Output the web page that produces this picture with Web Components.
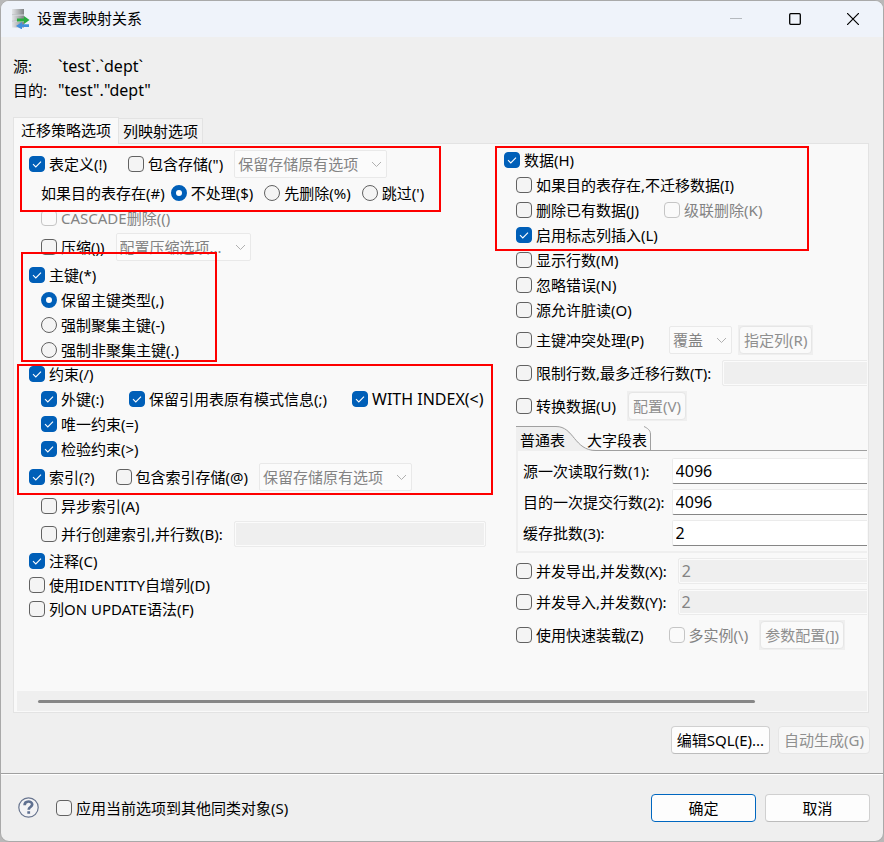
<!DOCTYPE html>
<html lang="zh-CN">
<head>
<meta charset="utf-8">
<title>设置表映射关系</title>
<style>
  body {
    margin: 0;
    background: #b8b8b8;
    color: #000;
    font: 15px/20px "Noto Sans", "Noto Sans CJK SC", sans-serif;
  }
</style>
</head>
<body>
<mapping-dialog></mapping-dialog>
<script>
  const define = (name, css, html, setup) => {
    const tpl = document.createElement('template');
    tpl.innerHTML = `<style>*{box-sizing:border-box}:host{box-sizing:border-box}${css}</style>${html}`;
    customElements.define(name, class extends HTMLElement {
      connectedCallback() {
        if (this.shadowRoot) return;
        this.attachShadow({ mode: 'open' }).append(tpl.content.cloneNode(true));
        if (setup) setup(this, this.shadowRoot);
      }
    });
  };

  /* Tick box with its label */
  define('opt-check', `
    :host { display: block; flex: none; white-space: nowrap; }
    :host([latin]) { font-size: 16px; }
    label { display: flex; align-items: center; gap: 4px; height: 20px; }
    .box { display: grid; width: 16px; height: 16px; }
    .box > * { grid-area: 1 / 1; }
    input { appearance: none; margin: 0; width: 16px; height: 16px; border: 1px solid #626262; border-radius: 4px; background: #f4f4f4; }
    input:checked { background: #005fb8; border-color: #005fb8; }
    svg { visibility: hidden; pointer-events: none; }
    input:checked + svg { visibility: visible; }
    :host([disabled]) { color: #838383; }
    input:disabled { border-color: #c5c5c5; background: #fafafa; }
  `, `<label><span class="box"><input type="checkbox"><svg width="16" height="16" viewBox="0 0 16 16" fill="none" stroke="#fff" stroke-width="1.1"><path d="M4 8.2 6.8 11 12 5.6"/></svg></span><span><slot></slot></span></label>`,
  (host, root) => {
    const box = root.querySelector('input');
    box.checked = host.hasAttribute('checked');
    box.disabled = host.hasAttribute('disabled');
  });

  /* Radio button with its label; buttons with the same group exclude each other */
  define('opt-radio', `
    :host { display: block; flex: none; white-space: nowrap; }
    label { display: flex; align-items: center; gap: 4px; height: 20px; }
    input { appearance: none; margin: 0; width: 16px; height: 16px; border: 1px solid #626262; border-radius: 50%; background: #f4f4f4; }
    input:checked { border: 5px solid #005fb8; background: #fff; }
  `, `<label><input type="radio"><span><slot></slot></span></label>`,
  (host, root) => {
    const dot = root.querySelector('input');
    dot.name = host.getAttribute('group');
    dot.checked = host.hasAttribute('checked');
    dot.addEventListener('change', () => {
      host.getRootNode().querySelectorAll(`opt-radio[group="${dot.name}"]`).forEach(other => {
        if (other !== host) other.shadowRoot.querySelector('input').checked = false;
      });
    });
  });

  /* Drop-down list */
  define('opt-select', `
    :host { display: grid; flex: none; width: 153px; height: 28px; }
    :host([size="m"]) { width: 135px; }
    :host([size="s"]) { width: 63px; }
    select, svg { grid-area: 1 / 1; }
    select { appearance: none; width: 100%; height: 28px; margin: 0; padding: 0 20px 0 3px; border: 1px solid #e9e9e9; border-radius: 2px; background: #fbfbfb; font: inherit; color: #838383; opacity: 1; text-overflow: clip; }
    svg { justify-self: end; align-self: center; margin-right: 5px; pointer-events: none; }
  `, `<select disabled><option></option></select><svg width="11" height="7" viewBox="0 0 11 7" fill="none" stroke="#b0b0b0"><path d="M1 1 5.5 5.5 10 1"/></svg>`,
  (host, root) => {
    root.querySelector('option').textContent = host.getAttribute('value');
    root.querySelector('select').setAttribute('aria-label', host.getAttribute('name'));
  });

  /* One-line text box */
  define('opt-field', `
    :host { display: block; flex: 1; min-width: 0; }
    input { display: block; width: 100%; height: 26px; margin: 0; padding: 0 3px; border: 1px solid #ebebeb; border-bottom-color: #868686; border-radius: 2px; background: #fff; font: inherit; font-size: 16px; color: #000; outline: none; }
    input:disabled { border-color: #ebebeb; background: #efefef; box-shadow: inset 0 0 0 1px #fbfbfb; color: #838383; }
  `, `<input type="text">`,
  (host, root) => {
    const field = root.querySelector('input');
    field.value = host.getAttribute('value') || '';
    field.disabled = host.hasAttribute('disabled');
    field.setAttribute('aria-label', host.getAttribute('name'));
  });

  /* Push button */
  define('push-button', `
    :host { display: block; flex: none; }
    button { display: block; width: 100%; height: 28px; margin: 0; padding: 0 5px; border: 1px solid #d0d0d0; border-bottom-color: #bcbcbc; border-radius: 4px; background: #fdfdfd; font: inherit; color: #000; white-space: nowrap; }
    button:disabled { border-color: #e6e6e6; background: #f7f7f7; color: #8f8f8f; }
    :host([inset]) { padding: 1px; background: #efefef; }
    :host([inset]) button { padding: 0 4px; background: #fafafa; }
    :host([wide]) { width: 105px; }
    :host([primary]) button { border-color: #0067c0; }
  `, `<button type="button"><slot></slot></button>`,
  (host, root) => { root.querySelector('button').disabled = host.hasAttribute('disabled'); });

  /* A horizontal run of controls */
  define('opt-row', `
    :host { display: flex; align-items: center; gap: 11px; white-space: nowrap; }
    :host([sub]) { padding-left: 12px; }
    ::slotted([near]) { margin-left: -5px; }
    ::slotted([far]) { margin-left: 10px; }
    ::slotted([farther]) { margin-left: 14px; }
  `, `<slot></slot>`);

  define('opt-group', `:host { display: flex; flex-direction: column; gap: 5px; }`, `<slot></slot>`);

  /* Red outline laid over the options */
  define('mark-box', `
    :host { position: absolute; border: 2px solid #fe0000; pointer-events: none; }
  `, ``);

  /* Title bar */
  define('title-bar', `
    :host { display: flex; align-items: center; height: 36px; padding: 0 7px 0 9px; background: #eff3fa; }
    svg { display: block; }
    h1 { flex: 1; margin: 0 0 2px 7px; font: inherit; }
    .btns { display: flex; }
    button { display: grid; place-items: center; width: 59px; height: 36px; margin: 0; padding: 0; border: 0; background: none; }
    button:last-child { width: 46px; margin-left: 6px; }
  `, `
    <svg width="20" height="20" viewBox="0 0 20 20">
      <defs>
        <linearGradient id="metal"><stop offset="0" stop-color="#e3e5e8"/><stop offset=".5" stop-color="#b4b6b8"/><stop offset="1" stop-color="#808284"/></linearGradient>
      </defs>
      <path fill="url(#metal)" d="M2 0h12v5.500H2zM2 6.500h12v5.500H2zM2 13h12v5.500H2z"/>
      <path fill="#8e9092" d="M2 5.200h12v1H2zM2 11.800h12v1H2z" opacity=".45"/>
      <path fill="#2bac40" d="M7 9.500h7V7l5.500 4-5.500 4v-2.500H7z"/>
      <path fill="#4390dc" d="M19 15.300h-7V13L6 17l6 3.500V18h7z"/>
    </svg>
    <h1>设置表映射关系</h1>
    <div class="btns">
      <button type="button" aria-label="最小化" disabled><svg width="12" height="12" stroke="#b5b9be"><path d="M0 5.500h12"/></svg></button>
      <button type="button" aria-label="最大化"><svg width="12" height="12" fill="none" stroke="#000" stroke-width="1.300"><rect x=".7" y=".7" width="10.600" height="10.600" rx="1"/></svg></button>
      <button type="button" aria-label="关闭"><svg width="12" height="12" stroke="#000" stroke-width="1.200"><path d="M0 0 12 12M12 0 0 12"/></svg></button>
    </div>`);

  /* Source and target names */
  define('source-info', `
    dl { display: grid; grid-template-columns: 45px 1fr; row-gap: 4px; margin: 0; }
    :host { display: block; padding: 19px 12px 17px; }
    dt, dd { margin: 0; }
    dd { font-size: 16px; }
  `, `<dl><dt>源:</dt><dd>\`test\`.\`dept\`</dd><dt>目的:</dt><dd>"test"."dept"</dd></dl>`);

  /* Batch settings with curved tabs */
  define('batch-tabs', `
    :host { display: block; margin-left: 12px; border-left: 2px solid #efefef; border-bottom: 2px solid #efefef; }
    nav { display: flex; height: 25px; margin-left: -2px; border-bottom: 1px solid #a0a0a0; }
    button { position: relative; height: 25px; margin: 0; padding: 2px 4px 0; border: 0; background: none; font: inherit; color: #000; }
    button span { position: relative; }
    button:first-child { padding-right: 22px; }
    button:last-child { padding-left: 0; }
    svg { position: absolute; top: 0; left: 0; }
    button:last-child svg { left: auto; right: 0; }
    .rows { display: grid; grid-template-columns: max-content minmax(0, 1fr); align-items: center; gap: 5px 7px; padding: 7px 0 5px 5px; white-space: nowrap; }
  `, `
    <nav role="tablist">
      <button type="button" role="tab" aria-selected="true"><svg width="80" height="25"><path fill="#efefef" d="M0 0H40C60 0 58 24.500 80 24.500V25H0z"/><path fill="none" stroke="#a0a0a0" d="M0 .5H40C58 .5 58 24.500 80 24.500"/></svg><span>普通表</span></button>
      <button type="button" role="tab" aria-selected="false"><svg width="8" height="25" fill="none" stroke="#a0a0a0"><path d="M1 .5C4 2 7.500 4 7.500 8V25"/></svg><span>大字段表</span></button>
    </nav>
    <div class="rows">
      <span>源一次读取行数(1):</span><opt-field name="源一次读取行数" value="4096"></opt-field>
      <span>目的一次提交行数(2):</span><opt-field name="目的一次提交行数" value="4096"></opt-field>
      <span>缓存批数(3):</span><opt-field name="缓存批数" value="2"></opt-field>
    </div>`);

  /* Left column: table objects */
  define('object-options', `
    :host { position: relative; display: flex; flex-direction: column; gap: 4px; padding-right: 18px; }
    .a { left: -9px; top: -4px; width: 421px; height: 66px; }
    .b { left: -8px; top: 102px; width: 196px; height: 110px; }
    .c { left: -12px; top: 214px; width: 476px; height: 131px; }
  `, `
    <opt-group>
      <opt-row><opt-check checked>表定义(!)</opt-check><opt-check far>包含存储(")</opt-check><opt-select name="存储" value="保留存储原有选项"></opt-select></opt-row>
      <opt-row sub><span>如果目的表存在(#)</span><opt-radio near group="exists" checked>不处理($)</opt-radio><opt-radio group="exists">先删除(%)</opt-radio><opt-radio group="exists">跳过(')</opt-radio></opt-row>
      <opt-row sub><opt-check disabled>CASCADE删除(()</opt-check></opt-row>
      <opt-row sub><opt-check>压缩())</opt-check><opt-select size="m" name="压缩" value="配置压缩选项..."></opt-select></opt-row>
    </opt-group>
    <opt-group>
      <opt-row><opt-check checked>主键(*)</opt-check></opt-row>
      <opt-row sub><opt-radio group="pk" checked>保留主键类型(,)</opt-radio></opt-row>
      <opt-row sub><opt-radio group="pk">强制聚集主键(-)</opt-radio></opt-row>
      <opt-row sub><opt-radio group="pk">强制非聚集主键(.)</opt-radio></opt-row>
    </opt-group>
    <opt-group>
      <opt-row><opt-check checked>约束(/)</opt-check></opt-row>
      <opt-row sub><opt-check checked>外键(:)</opt-check><opt-check farther checked>保留引用表原有模式信息(;)</opt-check><opt-check farther latin checked>WITH INDEX(&lt;)</opt-check></opt-row>
      <opt-row sub><opt-check checked>唯一约束(=)</opt-check></opt-row>
      <opt-row sub><opt-check checked>检验约束(&gt;)</opt-check></opt-row>
    </opt-group>
    <opt-group>
      <opt-row><opt-check checked>索引(?)</opt-check><opt-check far>包含索引存储(@)</opt-check><opt-select name="索引存储" value="保留存储原有选项"></opt-select></opt-row>
      <opt-row sub><opt-check>异步索引(A)</opt-check></opt-row>
      <opt-row sub><opt-check>并行创建索引,并行数(B):</opt-check><opt-field disabled name="并行数"></opt-field></opt-row>
    </opt-group>
    <opt-check checked>注释(C)</opt-check>
    <opt-check>使用IDENTITY自增列(D)</opt-check>
    <opt-check>列ON UPDATE语法(F)</opt-check>
    <mark-box class="a"></mark-box><mark-box class="b"></mark-box><mark-box class="c"></mark-box>`);

  /* Right column: data transfer */
  define('data-options', `
    :host { position: relative; display: block; }
    mark-box { left: -9px; top: -4px; width: 314px; height: 105px; }
    .bleed { margin-right: -4px; }
  `, `
    <opt-group>
      <opt-row><opt-check checked>数据(H)</opt-check></opt-row>
      <opt-row sub><opt-check>如果目的表存在,不迁移数据(I)</opt-check></opt-row>
      <opt-row sub><opt-check>删除已有数据(J)</opt-check><opt-check farther disabled>级联删除(K)</opt-check></opt-row>
      <opt-row sub><opt-check checked>启用标志列插入(L)</opt-check></opt-row>
      <opt-row sub><opt-check>显示行数(M)</opt-check></opt-row>
      <opt-row sub><opt-check>忽略错误(N)</opt-check></opt-row>
      <opt-row sub><opt-check>源允许脏读(O)</opt-check></opt-row>
      <opt-row sub><opt-check>主键冲突处理(P)</opt-check><opt-select farther size="s" name="冲突处理" value="覆盖"></opt-select><push-button near inset disabled>指定列(R)</push-button></opt-row>
      <opt-row sub class="bleed"><opt-check>限制行数,最多迁移行数(T):</opt-check><opt-field disabled name="最多迁移行数"></opt-field></opt-row>
      <opt-row sub><opt-check>转换数据(U)</opt-check><push-button inset disabled>配置(V)</push-button></opt-row>
      <batch-tabs class="bleed"></batch-tabs>
      <opt-row sub class="bleed"><opt-check>并发导出,并发数(X):</opt-check><opt-field disabled name="导出并发数" value="2"></opt-field></opt-row>
      <opt-row sub class="bleed"><opt-check>并发导入,并发数(Y):</opt-check><opt-field disabled name="导入并发数" value="2"></opt-field></opt-row>
      <opt-row sub><opt-check>使用快速装载(Z)</opt-check><opt-check farther disabled>多实例(\\)</opt-check><push-button inset disabled>参数配置(])</push-button></opt-row>
    </opt-group>
    <mark-box></mark-box>`);

  /* Tab folder with the option page and its scroll bar */
  define('tab-folder', `
    :host { display: flex; flex-direction: column; flex: 1; padding: 0 14px 0 12px; }
    nav { display: flex; align-items: flex-end; }
    button { margin: 0; padding: 0 4px; height: 25px; border: 1px solid #e3e3e3; border-width: 1px 1px 0 0; background: #f2f2f2; font: inherit; color: #000; }
    button[aria-selected="true"] { height: 27px; margin-bottom: -1px; padding: 0 7px 3px; border-left-width: 1px; background: #f9f9f9; position: relative; }
    .page { flex: 1; display: flex; flex-direction: column; padding: 0 1px 1px 3px; border: 1px solid #e3e3e3; background: #f9f9f9; }
    .view { flex: 1; display: grid; grid-template-columns: minmax(0, 475fr) minmax(0, 363fr); align-items: start; padding: 6px 0 20px 12px; overflow: hidden; }
    .bar { display: flex; align-items: center; height: 20px; padding: 0 112px 0 21px; background: #efefef; }
    .thumb { flex: 1; height: 3px; border-radius: 2px; background: #868686; }
  `, `
    <nav role="tablist"><button type="button" role="tab" aria-selected="true">迁移策略选项</button><button type="button" role="tab" aria-selected="false">列映射选项</button></nav>
    <div class="page">
      <div class="view"><object-options></object-options><data-options></data-options></div>
      <div class="bar"><div class="thumb"></div></div>
    </div>`);

  /* Row of actions under the folder, and the dialog's own footer */
  define('action-row', `
    :host { display: flex; justify-content: flex-end; gap: 8px; padding: 13px 13px 19px; }
  `, `<push-button>编辑SQL(E)...</push-button><push-button disabled>自动生成(G)</push-button>`);

  define('dialog-footer', `
    :host { display: flex; align-items: center; height: 68px; padding: 0 13px 0 17px; border-top: 1px solid #a0a0a0; box-shadow: inset 0 1px #fff; }
    .help { width: 21px; height: 21px; margin: 0 17px 0 0; padding: 0; border: 0; background: none; }
    .help svg { display: block; }
    opt-check { flex: 1; }
    .btns { display: flex; gap: 9px; }
  `, `
    <button class="help" type="button" aria-label="帮助"><svg width="21" height="21" viewBox="0 0 21 21" fill="none"><circle cx="10.500" cy="10.500" r="9.700" fill="#f3f3f5" stroke="#68758f" stroke-width="1.200"/><path d="M6.600 8.200C6.600 3.300 14.200 3.500 14.200 7.500 14.200 10 10.700 10 10.700 12.700" stroke="#5f7090" stroke-width="2.700"/><path d="M9.300 14.200h2.800v2.600H9.300z" fill="#5f7090"/></svg></button>
    <opt-check>应用当前选项到其他同类对象(S)</opt-check>
    <div class="btns"><push-button wide primary>确定</push-button><push-button wide>取消</push-button></div>`);

  define('mapping-dialog', `
    :host { display: flex; flex-direction: column; min-height: 100vh; border: 1px solid #a9a9a9; border-radius: 9px; background: #efefef; overflow: hidden; }
  `, `<title-bar></title-bar><source-info></source-info><tab-folder></tab-folder><action-row></action-row><dialog-footer></dialog-footer>`);
</script>
</body>
</html>
